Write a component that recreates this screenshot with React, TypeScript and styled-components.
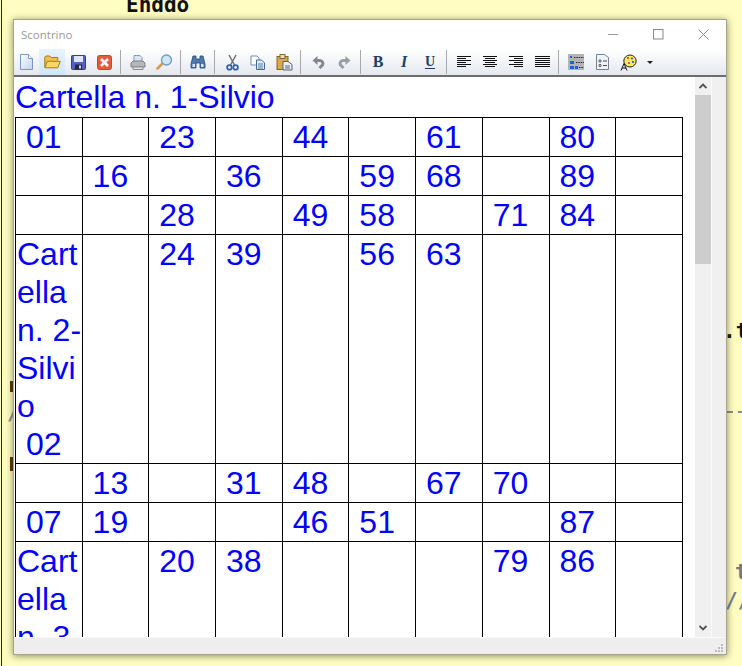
// @ts-nocheck
import React from 'react';
import styled, { createGlobalStyle } from 'styled-components';

const firstCard = [
  ['01', '', '23', '', '44', '', '61', '', '80', ''],
  ['', '16', '', '36', '', '59', '68', '', '89', ''],
  ['', '', '28', '', '49', '58', '', '71', '84', '']
];

const rows = [
  ['Cartella n. 2-Silvio\n 02', '', '24', '39', '', '56', '63', '', '', ''],
  ['', '13', '', '31', '48', '', '67', '70', '', ''],
  ['07', '19', '', '', '46', '51', '', '', '87', ''],
  ['Cartella n. 3-Silvio\n 03', '', '20', '38', '', '', '', '79', '86', '']
];

const cellText = (cell: string) => {
  if (!cell) return ' ';
  return cell.startsWith('Cartella') ? cell : ` ${cell}`;
};

const Icon = {
  New: () => (
    <svg width="15" height="18" viewBox="0 0 15 18">
      <defs>
        <linearGradient id="pg" x1="0" y1="0" x2="1" y2="1">
          <stop offset="0" stopColor="#ffffff" />
          <stop offset="1" stopColor="#bfd2ee" />
        </linearGradient>
      </defs>
      <path d="M1.5 1.5h8l4 4v11h-12z" fill="url(#pg)" stroke="#7a97c8" />
      <path d="M9.5 1.5v4h4" fill="#fff" stroke="#7a97c8" />
    </svg>
  ),
  Open: () => (
    <svg width="17" height="14" viewBox="0 0 17 14">
      <path d="M0.8 12V2.2l1-1.2h4l1.5 1.5h6.5v3" fill="#f0c04a" stroke="#a07c1c" />
      <path d="M0.8 12.8l2.5-6.5h13l-2.5 6.5z" fill="#fbd664" stroke="#a07c1c" />
    </svg>
  ),
  Save: () => (
    <svg width="15" height="15" viewBox="0 0 15 15">
      <rect x="0.5" y="0.5" width="14" height="14" rx="1" fill="#5560c4" stroke="#353d8c" />
      <rect x="3" y="1" width="9" height="6" fill="#dfe4f6" />
      <rect x="4" y="9.5" width="7" height="5" fill="#26263a" />
      <rect x="8" y="10.5" width="2" height="3" fill="#d8d8e0" />
    </svg>
  ),
  Close: () => (
    <svg width="15" height="15" viewBox="0 0 15 15">
      <rect x="0.5" y="0.5" width="14" height="14" rx="2" fill="#e45a3a" stroke="#c8442a" />
      <path d="M4 4l7 7M11 4l-7 7" stroke="#fff" strokeWidth="2.6" />
    </svg>
  ),
  Print: () => (
    <svg width="16" height="17" viewBox="0 0 16 17">
      <path d="M4 1.5h6l2 2v5H4z" fill="#dce6f2" stroke="#8a9cb0" />
      <path d="M1 9l2-2h10l2 2v4H1z" fill="#b4b8bc" stroke="#7c7f84" />
      <path d="M3 13h10v2.5H3z" fill="#e4e4e4" stroke="#8a8a8a" />
    </svg>
  ),
  Find: () => (
    <svg width="17" height="16" viewBox="0 0 17 16">
      <path d="M1.5 14.5l5-5" stroke="#d89a50" strokeWidth="2.6" strokeLinecap="round" />
      <circle cx="10.5" cy="6" r="5" fill="#cfe6fa" stroke="#6f9fc8" strokeWidth="1.4" />
    </svg>
  ),
  Binoculars: () => (
    <svg width="16" height="14" viewBox="0 0 16 14">
      <path d="M3 1h3v3h4V1h3l2 8v4H10V8H6v5H1V9z" fill="#4f78ad" stroke="#24466f" strokeWidth="0.8" />
      <rect x="2.5" y="9" width="2.5" height="3" fill="#d6e4f4" />
      <rect x="11" y="9" width="2.5" height="3" fill="#d6e4f4" />
    </svg>
  ),
  Cut: () => (
    <svg width="13" height="17" viewBox="0 0 13 17">
      <path d="M3 1l5.5 10M10 1L4.5 11" stroke="#6e7278" strokeWidth="1.5" />
      <circle cx="3.4" cy="13.4" r="2.3" fill="none" stroke="#2f5fb0" strokeWidth="1.7" />
      <circle cx="9.6" cy="13.4" r="2.3" fill="none" stroke="#2f5fb0" strokeWidth="1.7" />
    </svg>
  ),
  Copy: () => (
    <svg width="16" height="15" viewBox="0 0 16 15">
      <path d="M1 1h6l2 2v7H1z" fill="#fff" stroke="#6d8fbc" />
      <path d="M6.5 5h5l3 3v6.5h-8z" fill="#e4eefa" stroke="#41689e" />
      <path d="M8 9h5M8 11h5M8 13h5" stroke="#5078b0" />
    </svg>
  ),
  Paste: () => (
    <svg width="17" height="17" viewBox="0 0 17 17">
      <rect x="1" y="2.5" width="11" height="13" fill="#d9a94c" stroke="#8a6420" />
      <rect x="4" y="0.5" width="5" height="4" fill="#eddca8" stroke="#7a6a3a" />
      <path d="M7 7.5h5l4 3v5.5H7z" fill="#eef2f8" stroke="#55606e" />
      <path d="M9 12h5M9 14h5" stroke="#55606e" />
    </svg>
  ),
  Undo: () => (
    <svg width="13" height="14" viewBox="0 0 13 14">
      <path d="M4 5.5h4a3 3 0 0 1 2.4 4.6L7.5 13" fill="none" stroke="#84888e" strokeWidth="3" />
      <path d="M0.5 5.5L5.5 1v9z" fill="#84888e" />
    </svg>
  ),
  Redo: () => (
    <svg width="13" height="14" viewBox="0 0 13 14">
      <path d="M9 5.5H5a3 3 0 0 0-2.4 4.6L5.5 13" fill="none" stroke="#9a9ea4" strokeWidth="3" />
      <path d="M12.5 5.5L7.5 1v9z" fill="#9a9ea4" />
    </svg>
  ),
  Align: ({ kind }) => {
    const lines =
      kind === 'left'
        ? [[0, 14], [0, 9], [0, 14], [0, 9], [0, 14], [0, 9]]
        : kind === 'center'
          ? [[0, 14], [2, 12], [0, 14], [2, 12], [0, 14], [2, 12]]
          : kind === 'right'
            ? [[0, 14], [5, 14], [0, 14], [5, 14], [0, 14], [5, 14]]
            : [[0, 15], [0, 15], [0, 15], [0, 15], [0, 15], [0, 15]];
    return (
      <svg width="15" height="12" viewBox="0 0 15 12">
        {lines.map(([a, b], i) => (
          <path key={i} d={`M${a} ${i * 2 + 0.5}H${b}`} stroke="#111" />
        ))}
      </svg>
    );
  },
  Fields: () => (
    <svg width="16" height="16" viewBox="0 0 16 16">
      <path d="M2 2h2v2H2zM2 7h4v3H2zM2 12h4v3H2z" fill="#1f62d8" />
      <path d="M7 12h3v3H7z" fill="#1f62d8" />
      <path d="M6 3.5h10M8 8.5h8M11 13.5h5" stroke="#222" strokeDasharray="1.4 1" />
    </svg>
  ),
  Form: () => (
    <svg width="13" height="16" viewBox="0 0 13 16">
      <path d="M0.5 0.5h8l4 3v12h-12z" fill="#eef3f9" stroke="#6f8296" />
      <path d="M3 6h2v2H3zM3 10.5h2v2H3z" fill="none" stroke="#4a4a4a" strokeWidth="0.8" />
      <path d="M7 7h4M7 11.5h4" stroke="#4a4a4a" />
    </svg>
  ),
  Palette: () => (
    <svg width="17" height="17" viewBox="0 0 17 17">
      <ellipse cx="10" cy="7" rx="6.2" ry="6" fill="#f3ea66" stroke="#222" />
      <circle cx="8" cy="4" r="1" fill="#e02020" />
      <circle cx="12" cy="4.5" r="1" fill="#7028c0" />
      <circle cx="13" cy="8" r="1" fill="#2038d0" />
      <circle cx="9" cy="9" r="1" fill="#d02090" />
      <path d="M1 16.5L4 9.5l3 7M2 14h4" fill="none" stroke="#111" />
    </svg>
  )
};

function getToolbar() {
  return [
    [
      { id: 'new', icon: <Icon.New /> },
      { id: 'open', icon: <Icon.Open />, state: 'hover' },
      { id: 'save', icon: <Icon.Save /> },
      { id: 'close', icon: <Icon.Close /> }
    ],
    [
      { id: 'print', icon: <Icon.Print /> },
      { id: 'find', icon: <Icon.Find /> }
    ],
    [{ id: 'search', icon: <Icon.Binoculars /> }],
    [
      { id: 'cut', icon: <Icon.Cut /> },
      { id: 'copy', icon: <Icon.Copy /> },
      { id: 'paste', icon: <Icon.Paste /> }
    ],
    [
      { id: 'undo', icon: <Icon.Undo /> },
      { id: 'redo', icon: <Icon.Redo /> }
    ],
    [
      { id: 'b', icon: <BoldGlyph>B</BoldGlyph> },
      { id: 'i', icon: <ItalicGlyph>I</ItalicGlyph> },
      { id: 'u', icon: <UnderGlyph>U</UnderGlyph> }
    ],
    [
      { id: 'al', icon: <Icon.Align kind="left" /> },
      { id: 'ac', icon: <Icon.Align kind="center" /> },
      { id: 'ar', icon: <Icon.Align kind="right" /> },
      { id: 'aj', icon: <Icon.Align kind="justify" /> }
    ],
    [
      { id: 'fields', icon: <Icon.Fields />, state: 'active' },
      { id: 'form', icon: <Icon.Form /> },
      { id: 'palette', icon: <Icon.Palette /> }
    ]
  ];
}

export default function App() {
  return (
    <Desktop>
      <GlobalStyle />
      <LeftRule />
      <CodeText $left={126} $top={-7}>Enddo</CodeText>
      <CodeText $left={723} $top={319}>.t</CodeText>
      <CodeMark $top={381} $height={11} />
      <CodeMark $top={457} $height={14} />
      <CodeText $left={7} $top={401} $color="#8a8f98">/</CodeText>
      <CodeText $left={735} $top={560} $color="#77787a">t</CodeText>
      <CodeText $left={725} $top={589} $color="#6f7f90">//</CodeText>
      <Dashes />
      <Window>
        <TitleBar>
          <WindowTitle>Scontrino</WindowTitle>
          <WindowControls>
            <svg width="11" height="11" viewBox="0 0 11 11">
              <path d="M0 5.5h10" stroke="#999" />
            </svg>
            <svg width="11" height="11" viewBox="0 0 11 11">
              <rect x="0.5" y="0.5" width="9.5" height="9.5" fill="none" stroke="#888" />
            </svg>
            <svg width="11" height="11" viewBox="0 0 11 11">
              <path d="M0.5 0.5l10 10M10.5 0.5l-10 10" stroke="#888" />
            </svg>
          </WindowControls>
        </TitleBar>
        <Toolbar>
          {getToolbar().map((group, index) => (
            <ToolGroup key={index}>
              {index > 0 && <ToolSeparator />}
              {group.map((tool) => (
                <ToolButton key={tool.id} $state={tool.state}>
                  {tool.icon}
                </ToolButton>
              ))}
            </ToolGroup>
          ))}
          <DropArrow />
        </Toolbar>
        <Body>
          <Viewport>
            <Caption>Cartella n. 1-Silvio</Caption>
            <Grid>
              <tbody>
                {[...firstCard, ...rows].map((cells, r) => (
                  <tr key={r}>
                    {cells.map((cell, c) => (
                      <Cell key={c}>{cellText(cell)}</Cell>
                    ))}
                  </tr>
                ))}
              </tbody>
            </Grid>
          </Viewport>
          <Scrollbar>
            <ScrollArrow viewBox="0 0 9 6">
              <path d="M1 5l3.5-3.5L8 5" fill="none" stroke="#505050" strokeWidth="1.8" />
            </ScrollArrow>
            <ScrollTrack>
              <ScrollThumb />
            </ScrollTrack>
            <ScrollArrow viewBox="0 0 9 6">
              <path d="M1 1l3.5 3.5L8 1" fill="none" stroke="#505050" strokeWidth="1.8" />
            </ScrollArrow>
          </Scrollbar>
          <BodyGutter />
        </Body>
        <StatusBar>
          <svg width="9" height="9" viewBox="0 0 9 9" fill="#bdbdbd">
            <rect x="6" y="0" width="2" height="2" />
            <rect x="3" y="3" width="2" height="2" />
            <rect x="6" y="3" width="2" height="2" />
            <rect x="0" y="6" width="2" height="2" />
            <rect x="3" y="6" width="2" height="2" />
            <rect x="6" y="6" width="2" height="2" />
          </svg>
        </StatusBar>
      </Window>
    </Desktop>
  );
}

const GlobalStyle = createGlobalStyle`
  html, body {
    margin: 0;
    padding: 0;
    background: #fffdc2;
  }
`;

const Desktop = styled.div`
  position: relative;
  width: 742px;
  height: 666px;
  overflow: hidden;
  background: #fffdc2;
  font-family: "Liberation Sans", Arial, sans-serif;
`;

const LeftRule = styled.div`
  position: absolute;
  left: 1px;
  top: 0;
  bottom: 0;
  width: 1px;
  background: #222;
`;

const CodeText = styled.div`
  position: absolute;
  left: ${({ $left }) => $left}px;
  top: ${({ $top }) => $top}px;
  font: bold 21px "DejaVu Sans Mono", monospace;
  color: ${({ $color }) => $color || '#111'};
`;

const CodeMark = styled.div`
  position: absolute;
  left: 10px;
  top: ${({ $top }) => $top}px;
  width: 3px;
  height: ${({ $height }) => $height}px;
  background: #5a2a08;
`;

const Dashes = styled.div`
  position: absolute;
  left: 727px;
  right: 0;
  top: 411px;
  height: 2px;
  background: repeating-linear-gradient(90deg, #8a8a8a 0 6px, transparent 6px 11px);
`;

const Window = styled.div`
  position: absolute;
  left: 13px;
  top: 19px;
  width: 714px;
  height: 636px;
  display: flex;
  flex-direction: column;
  box-sizing: border-box;
  background: #f0f0f0;
  border: 1px solid #a5a58c;
  box-shadow: 0 1px 7px rgba(60, 60, 30, 0.6);
`;

const TitleBar = styled.div`
  display: flex;
  align-items: center;
  justify-content: space-between;
  height: 29px;
  flex: none;
  background: #fff;
`;

const WindowTitle = styled.div`
  padding-left: 7px;
  font: 11.5px "Open Sans", sans-serif;
  color: #9a9a9a;
`;

const WindowControls = styled.div`
  display: flex;
  gap: 34px;
  padding-right: 17px;
`;

const Toolbar = styled.div`
  display: flex;
  align-items: center;
  height: 28px;
  flex: none;
  box-sizing: border-box;
  border-bottom: 2px solid #6d6d6d;
  background: linear-gradient(#ffffff, #e4e8ee);
`;

const ToolGroup = styled.div`
  display: flex;
  align-items: center;
  height: 100%;

  &:first-child {
    margin-left: -1px;
  }
`;

const ToolSeparator = styled.div`
  width: 1px;
  height: 24px;
  margin: 0 4px 0 3px;
  background: #a8a8a8;
`;

const ToolButton = styled.div`
  width: 26px;
  height: 100%;
  display: flex;
  align-items: center;
  justify-content: center;
  background: ${({ $state }) =>
    $state === 'hover' ? 'linear-gradient(#e8f3fd, #cfe6fa)' : 'none'};

  & > svg {
    ${({ $state }) => ($state === 'active' ? 'background: #b4b4b4;' : '')}
  }
`;

const BoldGlyph = styled.span`
  font: bold 16px "Liberation Serif", serif;
  color: #1f3f66;
`;

const ItalicGlyph = styled.span`
  font: italic bold 16px "Liberation Serif", serif;
  color: #1f3f66;
`;

const UnderGlyph = styled.span`
  font: bold 14px "Liberation Serif", serif;
  color: #1f3f66;
  text-decoration: underline;
  text-underline-offset: 2px;
`;

const DropArrow = styled.div`
  width: 0;
  height: 0;
  margin-left: 6px;
  border-left: 3px solid transparent;
  border-right: 3px solid transparent;
  border-top: 3px solid #222;
`;

const Body = styled.div`
  flex: 1;
  min-height: 0;
  display: flex;
`;

const Viewport = styled.div`
  width: 681px;
  flex: none;
  overflow: hidden;
  background: #fff;
  padding-left: 1px;
  box-sizing: border-box;
`;

const Caption = styled.div`
  font-size: 32px;
  line-height: 41px;
  height: 40px;
  color: #0000ff;
  white-space: nowrap;
`;

const Grid = styled.table`
  width: 668px;
  table-layout: fixed;
  border-collapse: collapse;
`;

const Cell = styled.td`
  padding: 0 0 0 1px;
  border: 1px solid #000;
  height: 38px;
  vertical-align: top;
  font-size: 32px;
  line-height: 38px;
  color: #0000ff;
  white-space: pre-wrap;
  word-break: break-all;
`;

const Scrollbar = styled.div`
  width: 16px;
  flex: none;
  display: flex;
  flex-direction: column;
  background: #f0f0f0;
`;

const ScrollArrow = styled.svg`
  flex: none;
  width: 9px;
  height: 6px;
  padding: 6px 3.5px;
`;

const ScrollTrack = styled.div`
  flex: 1;
`;

const ScrollThumb = styled.div`
  height: 169px;
  background: #cdcdcd;
`;

const BodyGutter = styled.div`
  flex: 1;
  border-left: 1px solid #fafafa;
  background: #f0f0f0;
`;

const StatusBar = styled.div`
  height: 17px;
  flex: none;
  display: flex;
  justify-content: flex-end;
  align-items: flex-end;
  padding: 0 2px 1px 0;
  box-sizing: border-box;
  border-top: 1px solid #fafafa;
  background: #eeeeee;
`;
